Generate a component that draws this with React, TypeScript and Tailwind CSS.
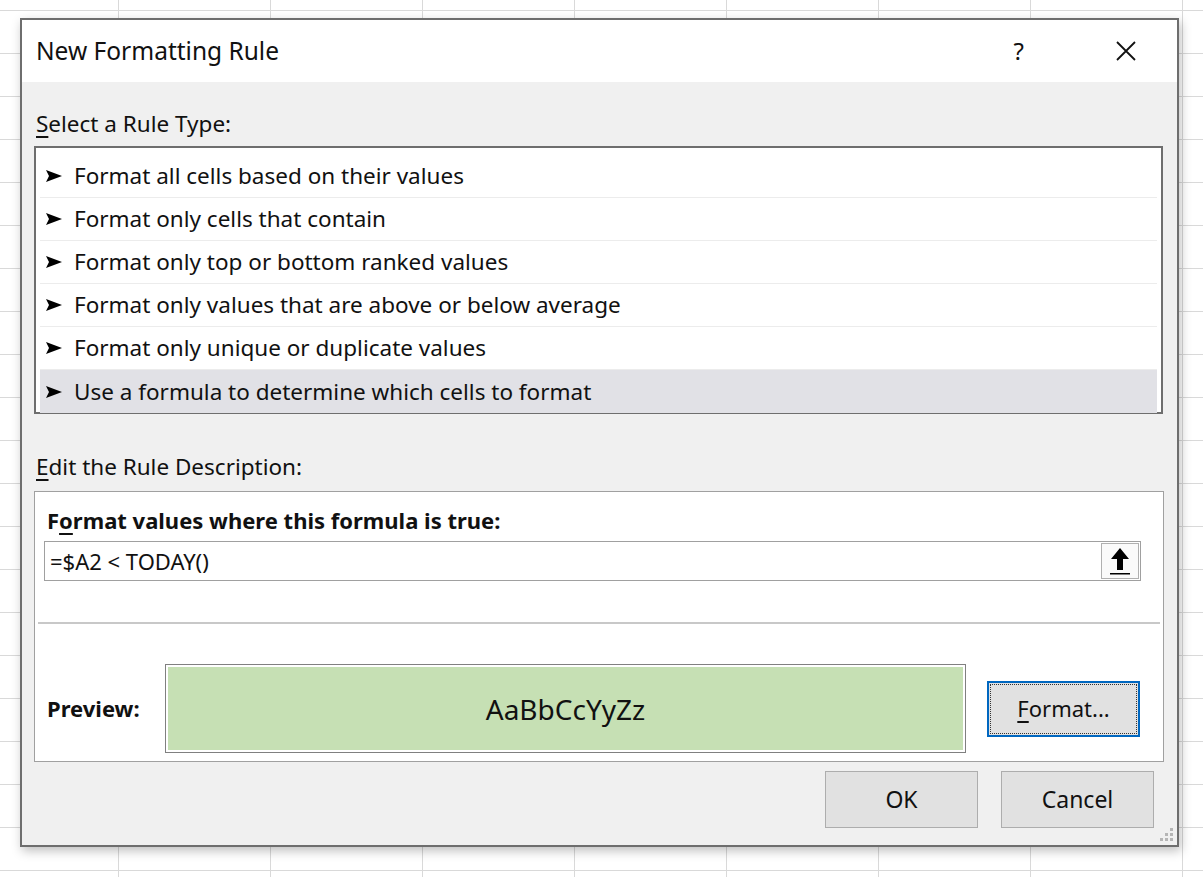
const rules = [
  "Format all cells based on their values",
  "Format only cells that contain",
  "Format only top or bottom ranked values",
  "Format only values that are above or below average",
  "Format only unique or duplicate values",
  "Use a formula to determine which cells to format",
];

const Arrow = () => (
  <svg width="16" height="12" viewBox="0 0 16 12" className="mr-[12px] shrink-0">
    <path d="M0 0 L16 6 L0 12 L3 6 Z" fill="#000" />
  </svg>
);

export default function App() {
  return (
    <div
      className="w-[1203px] h-[877px] overflow-hidden bg-white bg-[linear-gradient(to_right,#d9d9d9_1px,transparent_1px),linear-gradient(to_bottom,#d9d9d9_1px,transparent_1px)] bg-[size:152px_43px] bg-[position:118px_10px] pt-[18px] pl-[20px]"
      style={{ fontFamily: '"Noto Sans", "Open Sans", sans-serif' }}
    >
      <div className="w-[1159px] h-[829px] border-2 border-[#6e6e6e] bg-[#f0f0f0] shadow-[2px_4px_10px_rgba(0,0,0,0.25)] flex flex-col relative">
        {/* title bar */}
        <div className="h-[62px] bg-white flex items-center pl-[14px] pr-[40px] shrink-0">
          <div className="text-[24.5px] text-[#111] flex-1">New Formatting Rule</div>
          <div className="text-[24px] text-[#111] mr-[91px]">?</div>
          <svg width="22" height="22" viewBox="0 0 22 22">
            <path d="M2 2 L20 20 M20 2 L2 20" stroke="#111" strokeWidth="1.8" />
          </svg>
        </div>

        <div className="px-[12px] flex flex-col">
          <div className="text-[22.5px] text-[#111] mt-[28px] leading-[28px] pl-[2px]">
            <span className="underline underline-offset-4">S</span>elect a Rule Type:
          </div>
          <div className="mt-[8px] w-[1129px] h-[268px] border-2 border-[#6e6e6e] bg-white px-[4px] pt-[7px]">
            {rules.map((r, i) => (
              <div
                key={r}
                className={`h-[43px] flex items-center pl-[6px] text-[22.5px] text-[#111] ${
                  i === rules.length - 1 ? "bg-[#e1e1e6] h-[40px]" : "border-b border-[#ececec]"
                }`}
              >
                <Arrow />
                {r}
              </div>
            ))}
          </div>

          <div className="text-[22.5px] text-[#111] mt-[39px] leading-[28px] pl-[2px]">
            <span className="underline underline-offset-4">E</span>dit the Rule Description:
          </div>
          <div className="mt-[10px] w-[1130px] h-[271px] border border-[#a0a0a0] bg-white flex flex-col">
            <div className="text-[22px] font-bold text-[#111] pl-[12px] mt-[14px] leading-[28px]">
              F<span className="underline underline-offset-4">o</span>rmat values where this formula is true:
            </div>
            <div className="ml-[9px] mt-[7px] w-[1097px] h-[40px] border border-[#a0a0a0] flex items-center pl-[5px] pr-[1px]">
              <div className="flex-1 text-[22px] text-[#111]">=$A2 &lt; TODAY()</div>
              <div className="w-[38px] h-[36px] border border-[#b0b0b0] bg-[#fafafa] flex items-center justify-center">
                <svg width="22" height="30" viewBox="0 0 22 30">
                  <path d="M11 2 L20 13 L14 13 L14 24 L8 24 L8 13 L2 13 Z" fill="#000" />
                  <rect x="1" y="27" width="20" height="1.5" fill="#000" />
                </svg>
              </div>
            </div>
            <div className="mx-[3px] mt-[41px] h-[2px] bg-[#c8c8c8]" />
            <div className="flex items-center mt-[40px] pl-[12px]">
              <div className="w-[118px] text-[22px] font-bold text-[#111]">Preview:</div>
              <div className="w-[801px] h-[89px] border border-[#808080] p-[2px]">
                <div className="w-full h-full bg-[#c6e0b4] flex items-center justify-center text-[28px] text-[#111]">
                  AaBbCcYyZz
                </div>
              </div>
              <div className="ml-[21px] w-[153px] h-[56px] border-2 border-[#0067c0] bg-[#e1e1e1] flex items-center justify-center text-[22px] text-[#111] outline-1 outline-dotted outline-[#333] -outline-offset-4">
                <span className="underline underline-offset-4">F</span>ormat...
              </div>
            </div>
          </div>

          <div className="flex justify-end gap-[23px] mt-[9px] pr-[11px]">
            <div className="w-[153px] h-[57px] border border-[#adadad] bg-[#e1e1e1] flex items-center justify-center text-[23px] text-[#111]">
              OK
            </div>
            <div className="w-[153px] h-[57px] border border-[#adadad] bg-[#e1e1e1] flex items-center justify-center text-[23px] text-[#111]">
              Cancel
            </div>
          </div>
        </div>

        <svg width="14" height="14" viewBox="0 0 14 14" className="absolute right-[3px] bottom-[3px]">
          <g fill="#b5b5b5">
            <rect x="10" y="0" width="3" height="3" />
            <rect x="5" y="5" width="3" height="3" />
            <rect x="10" y="5" width="3" height="3" />
            <rect x="0" y="10" width="3" height="3" />
            <rect x="5" y="10" width="3" height="3" />
            <rect x="10" y="10" width="3" height="3" />
          </g>
        </svg>
      </div>
    </div>
  );
}
